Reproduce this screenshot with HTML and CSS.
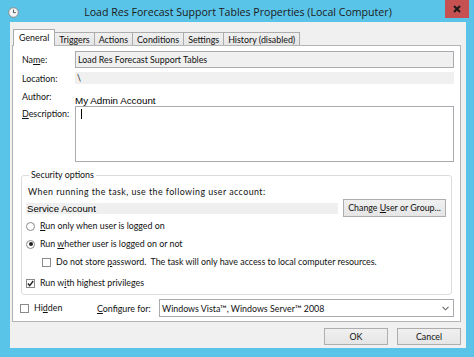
FILE: index.html
```html
<!DOCTYPE html>
<html lang="en">
<head>
    <meta charset="UTF-8">
    <title>Load Res Forecast Support Tables Properties</title>
    <link rel="stylesheet" href="styles.css">
</head>
<body>
    <div class="window">
        <div class="titlebar">
            <span class="app-icon">
                <svg width="11" height="11" viewBox="0 0 11 11">
                    <circle cx="5.5" cy="5.5" r="4.8" fill="#f4f4f4" stroke="#8a8a8a" stroke-width="1"/>
                    <path d="M5.5 2.6 V5.6 H7.8" fill="none" stroke="#555" stroke-width="1"/>
                </svg>
            </span>
            <div class="title">Load Res Forecast Support Tables Properties (Local Computer)</div>
            <div class="close-btn">
                <svg width="8" height="8" viewBox="0 0 8 8">
                    <path d="M1 1 L7 7 M7 1 L1 7" stroke="#1a1a1a" stroke-width="2"/>
                </svg>
            </div>
        </div>

        <div class="client">
            <div class="tabs">
                <div class="tab active">General</div>
                <div class="tab">Triggers</div>
                <div class="tab">Actions</div>
                <div class="tab">Conditions</div>
                <div class="tab">Settings</div>
                <div class="tab">History (disabled)</div>
            </div>

            <div class="panel">
                <div class="row name-row">
                    <label class="lbl">Na<u>m</u>e:</label>
                    <div class="field">Load Res Forecast Support Tables</div>
                </div>
                <div class="row location-row">
                    <label class="lbl">Location:</label>
                    <div class="field flat">\</div>
                </div>
                <div class="row author-row">
                    <label class="lbl">Author:</label>
                    <div class="author">My Admin Account</div>
                </div>
                <div class="row desc-row">
                    <label class="lbl"><u>D</u>escription:</label>
                    <div class="textarea"><span class="caret"></span></div>
                </div>

                <fieldset class="group">
                    <legend>Security options</legend>
                    <div class="hint">When running the task, use the following user account:</div>
                    <div class="account-row">
                        <div class="account">Service Account</div>
                        <button class="btn change-btn">Change <u>U</u>ser or Group...</button>
                    </div>
                    <div class="opt radio-1">
                        <span class="radio"></span>
                        <span><u>R</u>un only when user is logged on</span>
                    </div>
                    <div class="opt radio-2">
                        <span class="radio on"></span>
                        <span>Run <u>w</u>hether user is logged on or not</span>
                    </div>
                    <div class="opt indent">
                        <span class="check"></span>
                        <span>Do not store <u>p</u>assword.&nbsp; The task will only have access to local computer resources.</span>
                    </div>
                    <div class="opt highest">
                        <span class="check on">
                            <svg width="7" height="7" viewBox="0 0 7 7">
                                <path d="M0.8 3.6 L2.7 5.6 L6.2 1" fill="none" stroke="#222" stroke-width="1.4"/>
                            </svg>
                        </span>
                        <span>Run w<u>i</u>th highest privileges</span>
                    </div>
                </fieldset>

                <div class="bottom-row">
                    <div class="opt hidden-opt">
                        <span class="check"></span>
                        <span>Hi<u>d</u>den</span>
                    </div>
                    <label class="cfg-lbl"><u>C</u>onfigure for:</label>
                    <div class="select">
                        <span>Windows Vista™, Windows Server™ 2008</span>
                        <svg width="7" height="5" viewBox="0 0 7 5">
                            <path d="M0.5 0.8 L3.5 3.8 L6.5 0.8" fill="none" stroke="#666" stroke-width="1.1"/>
                        </svg>
                    </div>
                </div>
            </div>

            <div class="buttons">
                <button class="btn dlg-btn ok">OK</button>
                <button class="btn dlg-btn">Cancel</button>
            </div>
        </div>
    </div>
</body>
</html>
```

FILE: styles.css
```css
body {
    margin: 0;
    font-family: Lato, "Open Sans", sans-serif;
    font-size: 8.85px;
    color: #111;
}

u {
    text-decoration: underline;
    text-underline-offset: 1px;
}

.window {
    width: 474px;
    height: 357px;
    background-color: #5ac4e8;
    display: flex;
    flex-direction: column;
}

/* title bar */
.titlebar {
    height: 22px;
    display: flex;
    align-items: flex-start;
    padding-left: 8px;
}

.app-icon {
    margin-top: 7px;
    width: 11px;
    height: 11px;
}

.app-icon svg {
    display: block;
}

.title {
    flex: 1;
    text-align: center;
    padding-left: 12px;
    margin-top: 4px;
    font-family: "Open Sans", sans-serif;
    font-size: 10.6px;
    line-height: 16px;
    color: #1a1a1a;
}

.close-btn {
    width: 24px;
    height: 18px;
    margin-right: 5px;
    background-color: #c75050;
    display: flex;
    align-items: center;
    justify-content: center;
}

.close-btn svg {
    display: block;
}

/* client area */
.client {
    flex: 1;
    margin: 0 8px 9px 10px;
    background-color: #f0f0f0;
    padding: 7px 5px 0 2px;
}

.tabs {
    display: flex;
    align-items: flex-end;
    height: 16px;
    padding-left: 1px;
}

.tab {
    height: 13px;
    line-height: 13px;
    padding: 0 4px;
    border: 1px solid #acacac;
    border-bottom: none;
    border-left: none;
    background: linear-gradient(#f0f0f0, #e5e5e5);
    box-sizing: border-box;
}

.tab.active {
    height: 17px;
    line-height: 15px;
    padding: 0 5px;
    border-left: 1px solid #acacac;
    background: #fff;
    position: relative;
    margin-bottom: -1px;
    z-index: 1;
}

.panel {
    height: 277px;
    box-sizing: border-box;
    background-color: #fff;
    border: 1px solid #b4b4b4;
    padding: 5px 6px 0 9px;
}

.row {
    display: flex;
    align-items: center;
}

.lbl {
    width: 53px;
    flex-shrink: 0;
}

.field {
    flex: 1;
    height: 17px;
    line-height: 15px;
    box-sizing: border-box;
    border: 1px solid #a9abb0;
    background-color: #f0f0f0;
    padding-left: 2px;
}

.field.flat {
    height: 12px;
    line-height: 12px;
    border: none;
    background-color: #f0f0f0;
    padding-left: 2px;
}

.location-row {
    margin-top: 4px;
}

.author-row {
    margin-top: 5px;
    height: 17px;
    align-items: flex-start;
}

.author-row .lbl {
    line-height: 16px;
}

.author {
    font-family: "Liberation Sans", Arial, sans-serif;
    font-size: 9.8px;
    line-height: 11px;
    margin-top: 6px;
    color: #000;
}

.desc-row {
    align-items: flex-start;
}

.desc-row .lbl {
    line-height: 16px;
}

.textarea {
    flex: 1;
    height: 56px;
    box-sizing: border-box;
    border: 1px solid #a9abb0;
    background-color: #fff;
    padding: 2px 0 0 5px;
}

.caret {
    display: block;
    width: 1px;
    height: 10px;
    background-color: #000;
}

/* security options group */
.group {
    margin: 7px 2px 0 -1px;
    padding: 0 5px 5px 4px;
    border: 1px solid #dcdcdc;
    border-radius: 3px;
}

.group legend {
    margin-left: 3px;
    padding: 0 2px;
    line-height: 12px;
}

.hint {
    margin-top: 5px;
    padding-left: 2px;
    line-height: 12px;
    letter-spacing: 0.45px;
}

.account-row {
    display: flex;
    align-items: center;
    gap: 5px;
    margin-top: 1px;
}

.account {
    flex: 1;
    height: 11px;
    line-height: 11px;
    background-color: #efefef;
    padding-left: 1px;
    font-family: "Liberation Sans", Arial, sans-serif;
    font-size: 9.6px;
    color: #000;
}

.btn {
    font-family: Lato, "Open Sans", sans-serif;
    font-size: 8.85px;
    color: #111;
    border: 1px solid #adadad;
    background: linear-gradient(#f0f0f0, #e5e5e5);
    padding: 0;
    margin: 0;
    white-space: nowrap;
}

.change-btn {
    width: 103px;
    height: 18px;
    line-height: 16px;
}

.opt {
    display: flex;
    align-items: center;
    line-height: 12px;
}

.radio-1 {
    margin-top: 3px;
}

.radio-2 {
    margin-top: 6px;
}

.indent {
    margin-top: 6px;
    padding-left: 16px;
}

.highest {
    margin-top: 9px;
}

.radio {
    width: 9px;
    height: 9px;
    box-sizing: border-box;
    border: 1px solid #8a8a8a;
    border-radius: 50%;
    background-color: #fff;
    margin-right: 5px;
    display: flex;
    align-items: center;
    justify-content: center;
}

.radio.on::after {
    content: "";
    width: 4px;
    height: 4px;
    border-radius: 50%;
    background-color: #222;
}

.check {
    width: 9px;
    height: 9px;
    box-sizing: border-box;
    border: 1px solid #8a8a8a;
    background-color: #fff;
    margin-right: 5px;
    display: flex;
    align-items: center;
    justify-content: center;
}

.check svg {
    display: block;
}

/* hidden + configure row */
.bottom-row {
    display: flex;
    align-items: center;
    margin: 4px 0 0 -2px;
}

.hidden-opt {
    width: 77px;
}

.cfg-lbl {
    width: 62px;
}

.select {
    flex: 1;
    height: 18px;
    box-sizing: border-box;
    border: 1px solid #a9abb0;
    background-color: #fff;
    display: flex;
    align-items: center;
    justify-content: space-between;
    padding: 0 4px 0 2px;
}

/* dialog buttons */
.buttons {
    display: flex;
    justify-content: flex-end;
    gap: 9px;
    margin-top: 6px;
}

.dlg-btn {
    width: 64px;
    height: 17px;
    line-height: 15px;
}
```
